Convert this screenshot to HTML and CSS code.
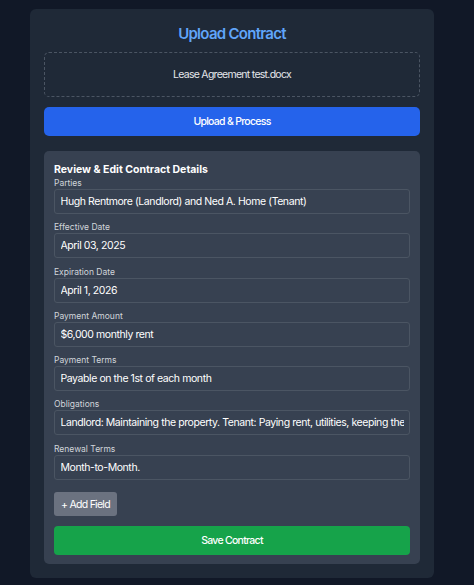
FILE: index.html
```html
<!DOCTYPE html>
<html lang="en">
<head>
  <meta charset="UTF-8">
  <meta name="viewport" content="width=device-width, initial-scale=1.0">
  <title>Upload Contract</title>
  <link rel="stylesheet" href="styles.css">
</head>
<body>
  <div class="card">
    <h1>Upload Contract</h1>
    <div class="drop-zone">Lease Agreement test.docx</div>
    <button class="upload-btn">Upload &amp; Process</button>

    <!-- Extracted details -->
    <div class="details">
      <h2>Review &amp; Edit Contract Details</h2>
      <label class="field">Parties
        <input type="text" value="Hugh Rentmore (Landlord) and Ned A. Home (Tenant)">
      </label>
      <label class="field">Effective Date
        <input type="text" value="April 03, 2025">
      </label>
      <label class="field">Expiration Date
        <input type="text" value="April 1, 2026">
      </label>
      <label class="field">Payment Amount
        <input type="text" value="$6,000 monthly rent">
      </label>
      <label class="field">Payment Terms
        <input type="text" value="Payable on the 1st of each month">
      </label>
      <label class="field">Obligations
        <input type="text" value="Landlord: Maintaining the property. Tenant: Paying rent, utilities, keeping the property clean.">
      </label>
      <label class="field">Renewal Terms
        <input type="text" value="Month-to-Month.">
      </label>
      <button class="add-btn">+ Add Field</button>
      <button class="save-btn">Save Contract</button>
    </div>
  </div>
</body>
</html>
```

FILE: styles.css
```css
body {
  font-family: 'Inter', 'Liberation Sans', sans-serif;
  letter-spacing: -0.045em;
  background-color: #111827;
  margin: 0;
  padding: 9px 0 0 30px;
  box-sizing: border-box;
  min-height: 100vh;
}
.card {
  width: 404px;
  background-color: #1f2937;
  border-radius: 6px;
  padding: 15px 14px 14px;
  box-sizing: border-box;
  display: flex;
  flex-direction: column;
}
h1 {
  margin: 0 0 8px;
  color: #60a5fa;
  font-size: 15px;
  line-height: 20px;
  font-weight: 600;
  text-align: center;
}
.drop-zone {
  height: 45px;
  border: 1px dashed #4b5563;
  border-radius: 5px;
  box-sizing: border-box;
  display: flex;
  justify-content: center;
  align-items: center;
  color: #e5e7eb;
  font-size: 10.5px;
}
button {
  font-family: inherit;
  letter-spacing: inherit;
  border: none;
  color: #fff;
  cursor: pointer;
}
.upload-btn {
  margin-top: 10px;
  height: 29px;
  background-color: #2563eb;
  border-radius: 5px;
  font-size: 10.5px;
  font-weight: 500;
}
.details {
  margin-top: 15px;
  background-color: #374151;
  border-radius: 5px;
  padding: 11px 10px 9px;
  display: flex;
  flex-direction: column;
}
h2 {
  margin: 0;
  color: #fff;
  font-size: 10.5px;
  line-height: 15px;
  font-weight: 700;
  letter-spacing: 0;
}
.field {
  display: flex;
  flex-direction: column;
  color: #d1d5db;
  font-size: 8.5px;
  line-height: 12px;
  letter-spacing: 0;
  margin-bottom: 7.3px;
}
.field input {
  height: 25px;
  margin: 0;
  padding: 0 5.5px;
  background-color: #374151;
  border: 1px solid #4b5563;
  border-radius: 3px;
  box-sizing: border-box;
  color: #fff;
  font-family: inherit;
  font-size: 10.5px;
  letter-spacing: -0.04em;
  outline: none;
}
.add-btn {
  align-self: flex-start;
  margin-top: 5px;
  height: 24px;
  padding: 0 7px;
  background-color: #6b7280;
  border-radius: 3px;
  font-size: 10.5px;
}
.save-btn {
  margin-top: 10px;
  height: 29px;
  background-color: #16a34a;
  border-radius: 4px;
  font-size: 10.5px;
  font-weight: 500;
}
```
